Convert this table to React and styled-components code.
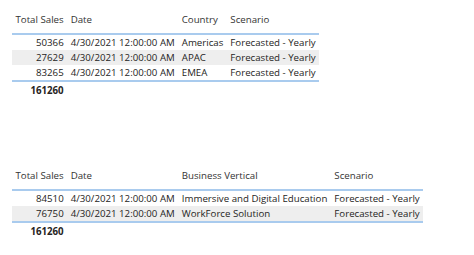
import React from 'react';
import styled, { createGlobalStyle } from 'styled-components';

const GlobalStyle = createGlobalStyle`
  html, body {
    margin: 0;
    padding: 0;
    background: #fff;
  }
  body {
    font-family: 'Open Sans', 'Noto Sans', sans-serif;
    color: #252423;
  }
`;

const Page = styled.div`
  width: 474px;
  height: 255px;
  padding: 12px 0 0 12px;
  box-sizing: border-box;
  display: flex;
  flex-direction: column;
  align-items: flex-start;
  gap: 70px;
`;

const Table = styled.table`
  border-collapse: collapse;
  font-size: 9.7px;
  line-height: 15px;
  white-space: nowrap;
`;

const Th = styled.th`
  font-weight: 400;
  text-align: left;
  color: #333;
  padding: 0 3.5px 6px 3.5px;
  border-bottom: 2px solid #a9cbee;
`;

const Td = styled.td`
  padding: 0 3.5px;
  text-align: ${p => (p.$num ? 'right' : 'left')};
  background: ${p => (p.$alt ? '#eeeeee' : 'transparent')};
`;

const LastRow = styled.tr`
  td {
    border-bottom: 2px solid #a9cbee;
  }
`;

const TotalCell = styled.td`
  padding: 1px 3.5px 0 3.5px;
  text-align: right;
  font-weight: 700;
`;

const countryRows = [
  { sales: 50366, region: 'Americas' },
  { sales: 27629, region: 'APAC' },
  { sales: 83265, region: 'EMEA' },
];

const verticalRows = [
  { sales: 84510, region: 'Immersive and Digital Education' },
  { sales: 76750, region: 'WorkForce Solution' },
];

const SalesTable = ({ label, rows }) => {
  const total = rows.reduce((s, r) => s + r.sales, 0);
  return (
    <Table>
      <thead>
        <tr>
          <Th>Total Sales</Th>
          <Th>Date</Th>
          <Th>{label}</Th>
          <Th>Scenario</Th>
        </tr>
      </thead>
      <tbody>
        {rows.map((r, i) => {
          const Row = i === rows.length - 1 ? LastRow : 'tr';
          const alt = i % 2 === 1;
          return (
            <Row key={r.region}>
              <Td $num $alt={alt}>{r.sales}</Td>
              <Td $alt={alt}>4/30/2021 12:00:00 AM</Td>
              <Td $alt={alt}>{r.region}</Td>
              <Td $alt={alt}>Forecasted - Yearly</Td>
            </Row>
          );
        })}
        <tr>
          <TotalCell>{total}</TotalCell>
          <td />
          <td />
          <td />
        </tr>
      </tbody>
    </Table>
  );
};

export default function App() {
  return (
    <>
      <GlobalStyle />
      <Page>
        <SalesTable label="Country" rows={countryRows} />
        <SalesTable label="Business Vertical" rows={verticalRows} />
      </Page>
    </>
  );
}
